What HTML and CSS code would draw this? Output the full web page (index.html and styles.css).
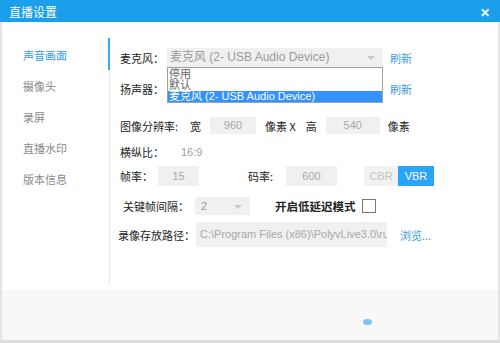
FILE: index.html
```html
<!DOCTYPE html>
<html lang="zh-CN">
<head>
    <meta charset="UTF-8">
    <title>直播设置</title>
    <link rel="stylesheet" href="styles.css">
</head>
<body>
    <div class="window">
        <div class="titlebar">
            <span class="title">直播设置</span>
            <span class="close">&#x2715;</span>
        </div>
        <div class="content">
            <div class="sidebar">
                <div class="menu">
                    <div class="item active">声音画面</div>
                    <div class="item">摄像头</div>
                    <div class="item">录屏</div>
                    <div class="item">直播水印</div>
                    <div class="item">版本信息</div>
                </div>
            </div>
            <div class="main">
                <div class="row r1">
                    <span class="label">麦克风：</span>
                    <div class="select wide"><span class="val">麦克风 (2- USB Audio Device)</span><span class="arrow"></span></div>
                    <span class="link">刷新</span>
                    <div class="dropdown">
                        <div class="opt">停用</div>
                        <div class="opt tight">默认</div>
                        <div class="opt sel">麦克风 (2- USB Audio Device)</div>
                    </div>
                </div>
                <div class="row r2">
                    <span class="label">扬声器：</span>
                    <div class="select wide"></div>
                    <span class="link">刷新</span>
                </div>
                <div class="row r3">
                    <span class="label">图像分辨率:</span>
                    <span class="unit w-kuan">宽</span>
                    <div class="box b960">960</div>
                    <span class="unit">像素 X</span>
                    <span class="unit w-gao">高</span>
                    <div class="box b540">540</div>
                    <span class="unit">像素</span>
                </div>
                <div class="row r4">
                    <span class="label">横纵比：</span>
                    <span class="ratio">16:9</span>
                </div>
                <div class="row r5">
                    <span class="label">帧率：</span>
                    <div class="box b15">15</div>
                    <span class="label l-rate">码率:</span>
                    <div class="box b600">600</div>
                    <div class="toggle">
                        <span class="cbr">CBR</span>
                        <span class="vbr">VBR</span>
                    </div>
                </div>
                <div class="row r6">
                    <span class="label l-key">关键帧间隔：</span>
                    <div class="select small"><span class="val">2</span><span class="arrow"></span></div>
                    <span class="label l-low">开启低延迟模式</span>
                    <span class="check"></span>
                </div>
                <div class="row r7">
                    <span class="label l-path">录像存放路径：</span>
                    <div class="path">C:\Program Files (x86)\PolyvLive3.0\ru</div>
                    <span class="link">浏览...</span>
                </div>
            </div>
        </div>
        <div class="footer">
            <span class="blob"></span>
        </div>
    </div>
</body>
</html>
```

FILE: styles.css
```css
*{
    margin:0;
    padding:0;
    box-sizing:border-box;
}
body{
    background:#fff;
    font-family:"Noto Sans CJK SC","Liberation Sans",sans-serif;
    font-size:11px;
    color:#333;
}
.window{
    width:500px;
    height:343px;
    display:flex;
    flex-direction:column;
    border-left:2px solid #e4e4e4;
    border-right:2px solid #e4e4e4;
    border-bottom:3px solid #dedede;
}
.titlebar{
    height:22px;
    margin:0 -2px;
    background:#1b9fea;
    color:#fff;
    display:flex;
    align-items:center;
    justify-content:space-between;
    padding:0 10px 0 9px;
}
.title{
    font-size:12px;
}
.close{
    font-size:12px;
    font-weight:bold;
}
.content{
    flex:1;
    display:flex;
}
.sidebar{
    width:108px;
    flex-shrink:0;
    padding:16px 0 5px;
}
.menu{
    height:100%;
    border-right:1px solid #e6e6e6;
    position:relative;
}
.menu::before{
    content:"";
    position:absolute;
    right:-1px;
    top:0;
    width:2px;
    height:32px;
    background:#3aa8ee;
}
.item{
    height:31px;
    line-height:31px;
    padding-left:21px;
    color:#8a8a8a;
}
.item:first-child{
    line-height:34px;
    height:33px;
}
.item.active{
    color:#2c9fe6;
}
.main{
    flex:1;
    padding:26px 0 0 10px;
}
.row{
    display:flex;
    align-items:center;
    position:relative;
}
.row > *{
    flex-shrink:0;
}
.label{
    color:#222;
    white-space:nowrap;
}
.r1{ height:19px; }
.r2{ height:19px; margin-top:12px; }
.r3{ height:17px; margin-top:19px; }
.r4{ height:16px; margin-top:10px; }
.r5{ height:20px; margin-top:6px; }
.r6{ height:18px; margin-top:11px; }
.r7{ height:25px; margin-top:7px; }
.r1 .label, .r2 .label{
    width:47px;
}
.select{
    height:19px;
    background:#f0f0f0;
    color:#9a9a9a;
    font-family:"Liberation Sans","Noto Sans CJK SC",sans-serif;
    padding-left:3px;
    line-height:19px;
    position:relative;
    white-space:nowrap;
    overflow:hidden;
}
.select .arrow{
    position:absolute;
    right:8px;
    top:8px;
    border-left:4px solid transparent;
    border-right:4px solid transparent;
    border-top:4px solid #c8c8c8;
}
.wide{
    width:216px;
    font-size:12px;
}
.link{
    color:#3a9be0;
    margin-left:7px;
}
.dropdown{
    position:absolute;
    left:47px;
    top:19px;
    width:216px;
    height:36px;
    background:#fff;
    border:1px solid #a0a0a0;
    font-size:11px;
    z-index:2;
}
.opt{
    height:11px;
    line-height:11px;
    padding-left:1px;
    color:#666;
}
.opt.tight{
    height:12px;
}
.opt.sel{
    background:#3392fb;
    color:#fff;
    font-family:"Liberation Sans","Noto Sans CJK SC",sans-serif;
}
.unit{
    color:#222;
    white-space:nowrap;
}
.r3 .label{
    width:70px;
}
.w-kuan{
    width:20px;
}
.w-gao{
    margin-left:10px;
    width:20px;
}
.box{
    background:#f0f0f0;
    color:#a8a8a8;
    text-align:center;
    height:17px;
    line-height:17px;
    font-family:"Liberation Sans",sans-serif;
    font-size:11px;
}
.b960{ width:46px; margin-right:9px; }
.b540{ width:54px; margin-right:8px; }
.ratio{
    margin-left:17px;
    color:#a0a0a0;
    font-family:"Liberation Sans",sans-serif;
}
.r5 .box{
    height:20px;
    line-height:20px;
}
.r5 .label{
    width:38px;
}
.b15{ width:41px; }
.r5 .l-rate{
    margin-left:49px;
}
.b600{ width:51px; }
.toggle{
    display:flex;
    margin-left:27px;
    height:20px;
    font-family:"Liberation Sans",sans-serif;
    font-size:11px;
}
.cbr{
    width:34px;
    background:#f2f2f2;
    color:#c4c4c4;
    text-align:center;
    line-height:20px;
}
.vbr{
    width:36px;
    background:#2aa4f4;
    color:#fff;
    text-align:center;
    line-height:20px;
}
.l-key{
    padding-left:3px;
    width:75px;
}
.small{
    width:55px;
    height:18px;
    line-height:18px;
    font-size:11px;
    padding-left:6px;
}
.l-low{
    margin-left:25px;
    font-weight:bold;
    font-size:11.5px;
}
.check{
    width:14px;
    height:14px;
    border:1px solid #777;
    margin-left:6px;
    background:#fff;
}
.l-path{
    margin-left:-2px;
    width:78px;
}
.path{
    width:191px;
    height:25px;
    background:#f0f0f0;
    color:#a8a8a8;
    font-family:"Liberation Sans",sans-serif;
    font-size:11px;
    line-height:25px;
    padding-left:4px;
    white-space:nowrap;
    overflow:hidden;
}
.r7 .link{
    margin-left:13px;
}
.footer{
    height:50px;
    background:#f8f8f8;
    position:relative;
}
.blob{
    position:absolute;
    left:361px;
    top:29px;
    width:9px;
    height:6px;
    border-radius:50%;
    background:#7cc4f2;
}
```
